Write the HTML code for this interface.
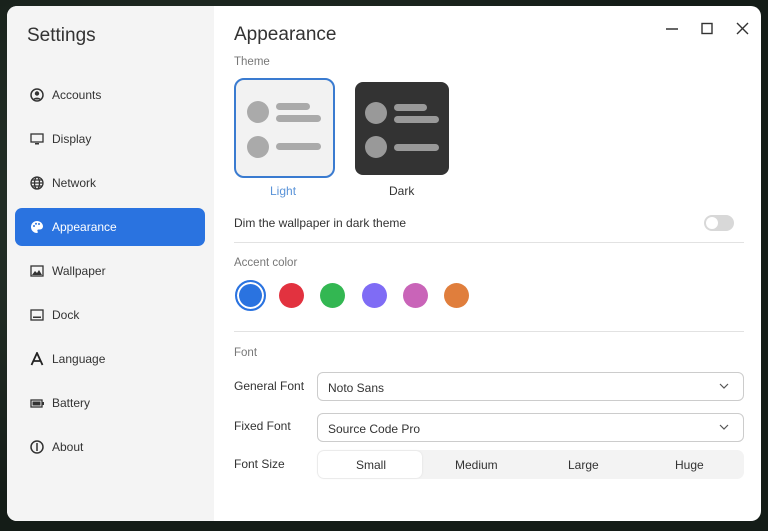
<!DOCTYPE html>
<html><head><style>
*{margin:0;padding:0;box-sizing:border-box}
body{width:768px;height:531px;overflow:hidden;font-family:"Liberation Sans",sans-serif;background:radial-gradient(ellipse at 30% 40%,#2c3a30,#141c17 70%),#18211b;position:relative;color:#2a2a2a}
.win{position:absolute;left:7px;top:6px;width:754px;height:515px;background:#fff;border-radius:10px;overflow:hidden}
.side{position:absolute;left:0;top:0;width:207px;height:515px;background:#f4f4f4}
.side h1{position:absolute;left:20px;top:19px;font-size:19px;font-weight:normal;color:#333}
.item{position:absolute;left:8px;width:190px;height:38px;border-radius:7px;font-size:12px;color:#333;display:flex;align-items:center;padding-left:15px}
.item svg{width:14px;height:14px;margin-right:8px}
.item.act{background:#2a73e0;color:#fff}
.t{position:absolute;font-size:12px;color:#333}
.g{position:absolute;font-size:11.5px;color:#777}
.dd{position:absolute;left:310px;width:427px;height:29px;border:1px solid #ccc;border-radius:6px;font-size:12px;padding:8px 10px;color:#333}
.dd svg{position:absolute;right:14px;top:10px}
.hr{position:absolute;left:227px;width:510px;height:1px;background:#e2e2e2}
.c{position:absolute;top:277px;width:25px;height:25px;border-radius:50%}
</style></head><body>
<div class="win">
<div class="side">
<h1>Settings</h1>
<div class="item" style="top:70px"><svg viewBox="0 0 14 14"><circle cx="7" cy="7" r="6" fill="none" stroke="#333" stroke-width="1.5"/><circle cx="7" cy="5.5" r="2.2" fill="#333"/><path d="M3 11.5c1-2.5 7-2.5 8 0" fill="#333"/></svg>Accounts</div>
<div class="item" style="top:114px"><svg viewBox="0 0 14 14"><rect x="1" y="2" width="12" height="8" fill="none" stroke="#333" stroke-width="1.3"/><rect x="5" y="11" width="4" height="1.5" fill="#333"/></svg>Display</div>
<div class="item" style="top:158px"><svg viewBox="0 0 14 14" fill="none" stroke="#333" stroke-width="1.3"><circle cx="7" cy="7" r="6"/><ellipse cx="7" cy="7" rx="2.5" ry="6"/><path d="M1 7h12M2 4h10M2 10h10"/></svg>Network</div>
<div class="item act" style="top:202px"><svg viewBox="0 0 14 14"><path d="M7 1a6 6 0 1 0 0 12c1 0 1-1 .5-1.7-.5-.8 0-1.8 1-1.8H10a3 3 0 0 0 3-3C13 3.5 10.3 1 7 1z" fill="#fff"/><circle cx="4" cy="6" r="1" fill="#2a73e0"/><circle cx="6" cy="3.8" r="1" fill="#2a73e0"/><circle cx="9" cy="4" r="1" fill="#2a73e0"/></svg>Appearance</div>
<div class="item" style="top:246px"><svg viewBox="0 0 14 14"><rect x="1" y="2" width="12" height="10" fill="none" stroke="#333" stroke-width="1.3"/><path d="M2 11l3-4 2 2 2-3 3 5z" fill="#333"/></svg>Wallpaper</div>
<div class="item" style="top:290px"><svg viewBox="0 0 14 14"><rect x="1" y="2" width="12" height="10" fill="none" stroke="#333" stroke-width="1.3"/><rect x="3" y="8.5" width="8" height="1.5" fill="#333"/></svg>Dock</div>
<div class="item" style="top:334px"><svg viewBox="0 0 14 14"><path d="M1.5 13L7 1l5.5 12M3.7 9h6.6" fill="none" stroke="#222" stroke-width="1.8"/></svg>Language</div>
<div class="item" style="top:378px"><svg viewBox="0 0 14 14"><rect x="1" y="4" width="11" height="7" fill="none" stroke="#333" stroke-width="1.3"/><rect x="2.5" y="5.5" width="8" height="4" fill="#333"/><rect x="12.5" y="6" width="1.5" height="3" fill="#333"/></svg>Battery</div>
<div class="item" style="top:422px"><svg viewBox="0 0 14 14" fill="none" stroke="#333" stroke-width="1.5"><circle cx="7" cy="7" r="6"/><path d="M7 3v8"/></svg>About</div>
</div>
<div style="position:absolute;left:227px;top:18px;font-size:19px;color:#333">Appearance</div>
<svg style="position:absolute;left:655px;top:15px" width="95" height="16" fill="none" stroke="#333" stroke-width="1.4"><path d="M4 8h12"/><rect x="40" y="2.5" width="10" height="10"/><path d="M75 2l11 11M86 2L75 13"/></svg>
<div class="g" style="left:227px;top:50px">Theme</div>
<div style="position:absolute;left:227px;top:72px;width:101px;height:100px;border:2.5px solid #3a7bd0;border-radius:10px;background:#f2f2f2">
<svg width="96" height="95"><g fill="#aaa"><circle cx="22" cy="32" r="11"/><circle cx="22" cy="67" r="11"/><rect x="40" y="23" width="34" height="7" rx="3.5"/><rect x="40" y="35" width="45" height="7" rx="3.5"/><rect x="40" y="63" width="45" height="7" rx="3.5"/></g></svg></div>
<div style="position:absolute;left:348px;top:76px;width:94px;height:93px;border-radius:8px;background:#333">
<svg width="94" height="93"><g fill="#999"><circle cx="21" cy="31" r="11"/><circle cx="21" cy="65" r="11"/><rect x="39" y="22" width="33" height="7" rx="3.5"/><rect x="39" y="34" width="45" height="7" rx="3.5"/><rect x="39" y="62" width="45" height="7" rx="3.5"/></g></svg></div>
<div class="t" style="left:263px;top:178px;color:#5a93d8">Light</div>
<div class="t" style="left:382px;top:178px">Dark</div>
<div class="t" style="left:227px;top:210px">Dim the wallpaper in dark theme</div>
<div style="position:absolute;left:697px;top:209px;width:30px;height:16px;border-radius:8px;background:#d8d8d8"><div style="position:absolute;left:2px;top:2px;width:12px;height:12px;border-radius:50%;background:#fff"></div></div>
<div class="hr" style="top:236px"></div>
<div class="g" style="left:227px;top:251px">Accent color</div>
<div class="c" style="left:228px;top:274px;width:31px;height:31px;border:2px solid #2a73e0;background:#2a73e0;box-shadow:inset 0 0 0 2px #fff"></div>
<div class="c" style="left:272px;background:#e2323f"></div>
<div class="c" style="left:313px;background:#33b752"></div>
<div class="c" style="left:355px;background:#7f6cf5"></div>
<div class="c" style="left:396px;background:#c964b8"></div>
<div class="c" style="left:437px;background:#e07e3c"></div>
<div class="hr" style="top:325px"></div>
<div class="g" style="left:227px;top:341px">Font</div>
<div class="t" style="left:227px;top:373px">General Font</div>
<div class="dd" style="top:366px">Noto Sans<svg width="10" height="7"><path d="M1 1l4 4 4-4" fill="none" stroke="#555" stroke-width="1.2"/></svg></div>
<div class="t" style="left:227px;top:413px">Fixed Font</div>
<div class="dd" style="top:407px">Source Code Pro<svg width="10" height="7"><path d="M1 1l4 4 4-4" fill="none" stroke="#555" stroke-width="1.2"/></svg></div>
<div class="t" style="left:227px;top:451px">Font Size</div>
<div style="position:absolute;left:310px;top:444px;width:427px;height:29px;border-radius:7px;background:#f3f3f3;font-size:12px;color:#333">
<div style="position:absolute;left:1px;top:1px;width:104px;height:27px;border-radius:6px;background:#fff;box-shadow:0 0 2px rgba(0,0,0,.1)"></div>
<span style="position:absolute;left:39px;top:8px">Small</span>
<span style="position:absolute;left:138px;top:8px">Medium</span>
<span style="position:absolute;left:251px;top:8px">Large</span>
<span style="position:absolute;left:358px;top:8px">Huge</span>
</div>
</div>
</body></html>
